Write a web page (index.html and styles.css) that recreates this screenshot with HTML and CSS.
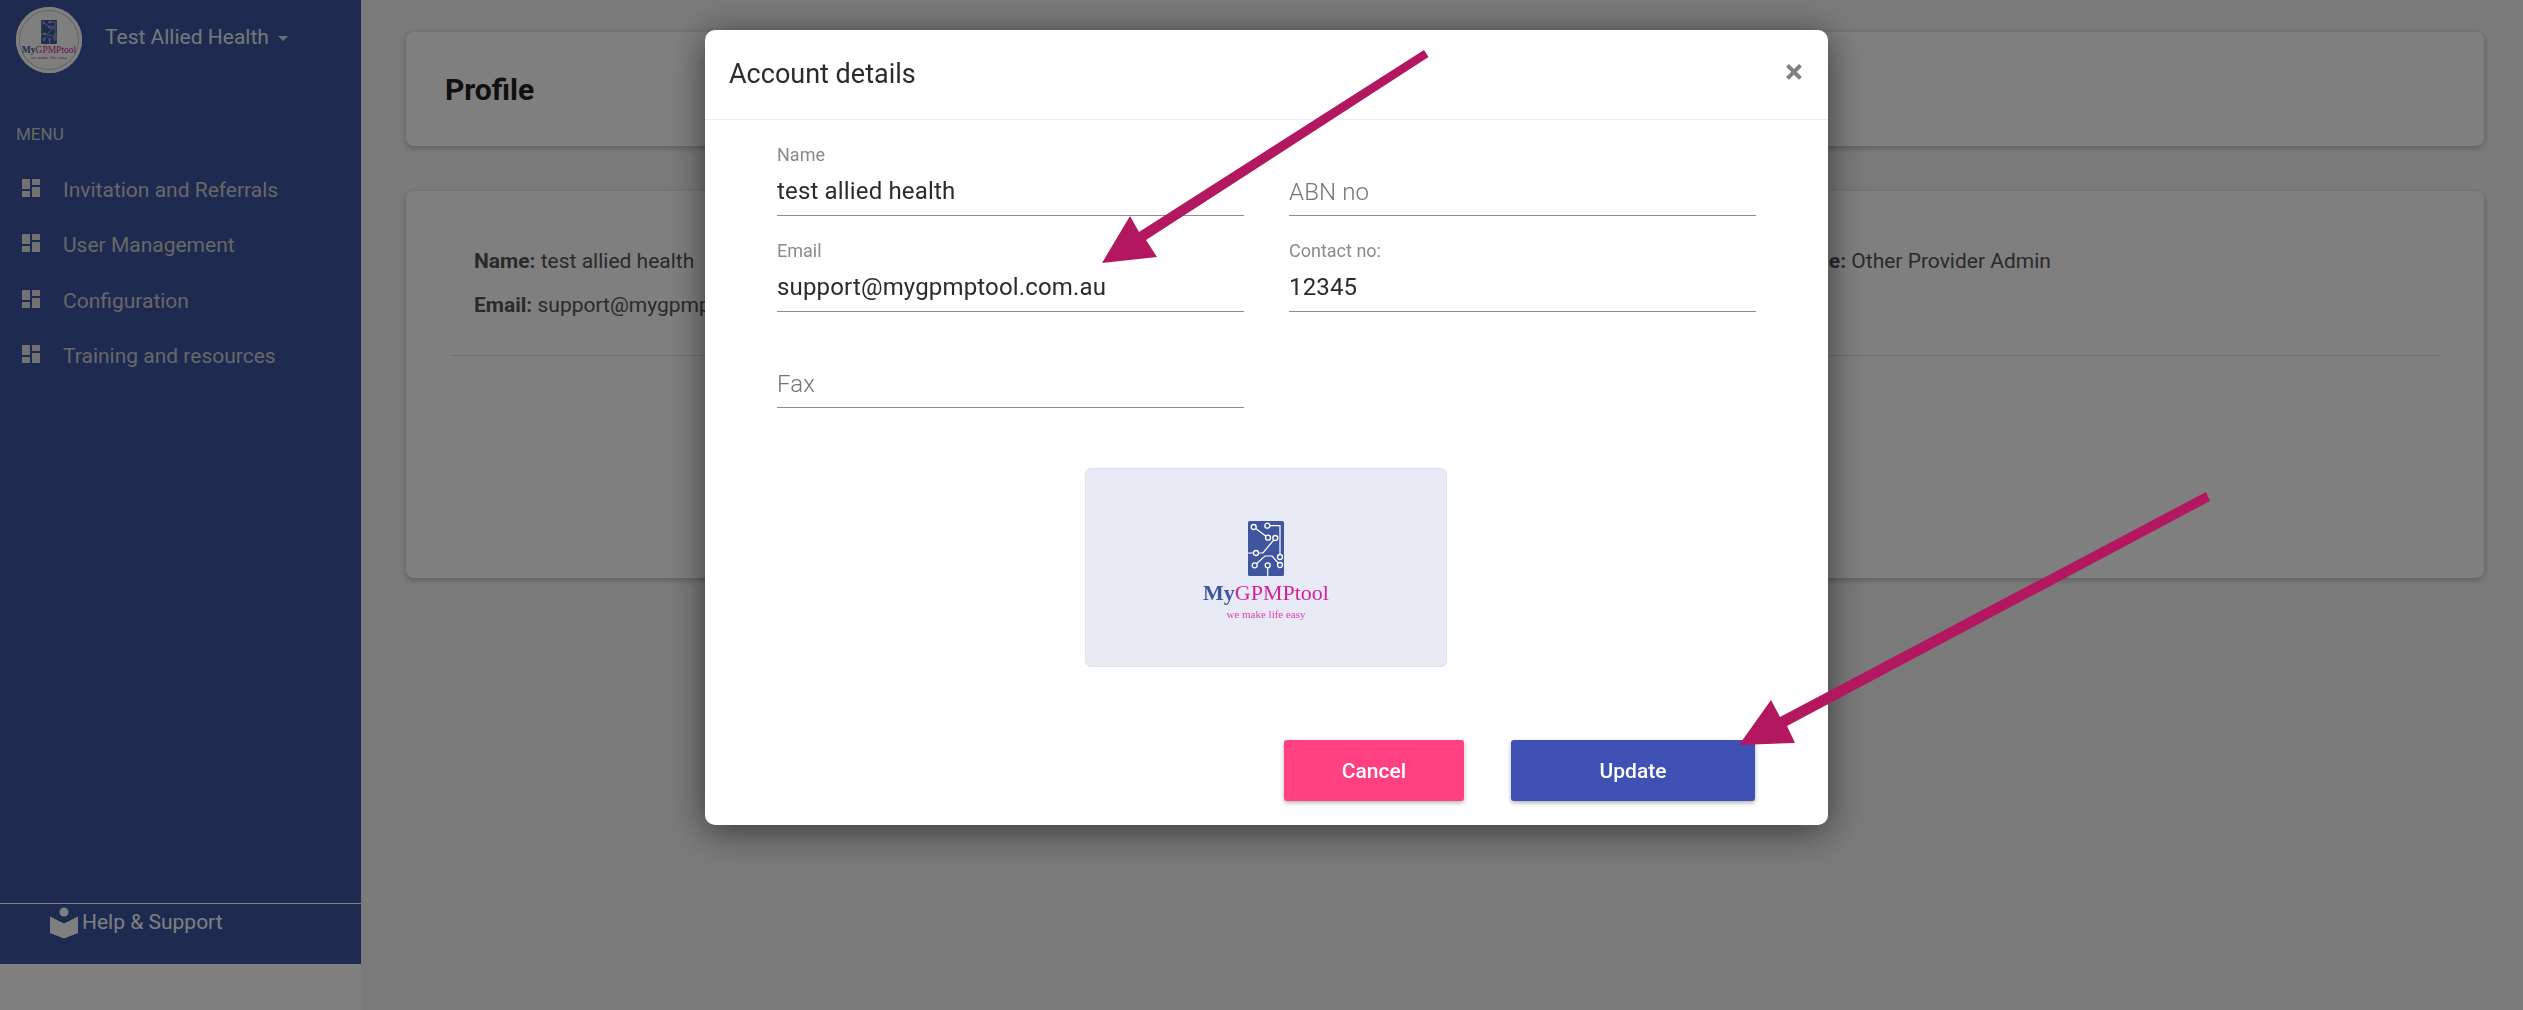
FILE: index.html
```html
<!DOCTYPE html>
<html lang="en">
<head>
	<title>Profile</title>
	<link rel="stylesheet" href="styles.css">
</head>
<body>
<svg class="defs" width="0" height="0">
	<symbol id="circuit" viewBox="0 0 36 55">
		<rect width="36" height="55" rx="1.5" fill="#3f569f"/>
		<g fill="none" stroke="#fff" stroke-width="1.2">
			<path d="M5.7 6 20 16.7M19.3 4.7H32V36M0 32H15L27.3 17M6.7 44.3 17 35H24L32 44M19.7 44.3V55"/>
			<g fill="#3f569f" stroke-width="1.3">
				<circle cx="5.7" cy="6" r="2.5"/>
				<circle cx="19.3" cy="4.7" r="2.5"/>
				<circle cx="20" cy="16.7" r="2.5"/>
				<circle cx="27.3" cy="17" r="2.5"/>
				<circle cx="8" cy="32" r="2.5"/>
				<circle cx="32" cy="36" r="2.5"/>
				<circle cx="6.7" cy="44.3" r="2.5"/>
				<circle cx="32" cy="44" r="2.5"/>
				<circle cx="19.7" cy="44.3" r="2.5"/>
			</g>
		</g>
	</symbol>
	<symbol id="dash" viewBox="3 3 18 18">
		<path d="M3 13h8V3H3v10zm0 8h8v-6H3v6zm10 0h8V11h-8v10zm0-18v6h8V3h-8z"/>
	</symbol>
</svg>

<div class="page">
	<aside class="sidebar">
		<div class="user">
			<div class="avatar">
				<svg class="avatar-icon"><use href="#circuit"/></svg>
				<div class="avatar-name"><b>My</b><span>GPMPtool</span></div>
				<div class="avatar-tag">we make life easy</div>
			</div>
			<span class="user-name">Test Allied Health</span>
			<span class="caret"></span>
		</div>
		<div class="menu-title">MENU</div>
		<nav class="menu">
			<a class="menu-item"><svg class="menu-icon"><use href="#dash"/></svg>Invitation and Referrals</a>
			<a class="menu-item"><svg class="menu-icon"><use href="#dash"/></svg>User Management</a>
			<a class="menu-item"><svg class="menu-icon"><use href="#dash"/></svg>Configuration</a>
			<a class="menu-item"><svg class="menu-icon"><use href="#dash"/></svg>Training and resources</a>
		</nav>
		<div class="help">
			<svg class="help-icon" viewBox="0 0 28 32">
				<circle cx="14" cy="5" r="4.5"/>
				<path d="M0 9.500 14 16.500 28 9.500V26L14 31.500 0 26z"/>
			</svg>
			Help &amp; Support
		</div>
	</aside>

	<main class="main">
		<section class="card card-title">
			<h1>Profile</h1>
		</section>
		<section class="card card-info">
			<div class="info">
				<p><strong>Name:</strong> test allied health</p>
				<p><strong>Role:</strong> Other Provider Admin</p>
				<p><strong>Email:</strong> support@mygpmptool.com.au</p>
			</div>
			<hr class="rule">
		</section>
	</main>
</div>

<div class="backdrop">
	<div class="modal">
		<div class="modal-head">
			<h2>Account details</h2>
			<span class="close">×</span>
		</div>
		<form class="fields">
			<div class="field">
				<label>Name</label>
				<div class="value">test allied health</div>
			</div>
			<div class="field">
				<div class="value empty">ABN no</div>
			</div>
			<div class="field">
				<label>Email</label>
				<div class="value">support@mygpmptool.com.au</div>
			</div>
			<div class="field">
				<label>Contact no:</label>
				<div class="value">12345</div>
			</div>
			<div class="field">
				<div class="value empty">Fax</div>
			</div>
		</form>
		<div class="logo-box">
			<svg class="logo-icon"><use href="#circuit"/></svg>
			<div class="logo-name"><b>My</b><span>GPMPtool</span></div>
			<div class="logo-tag">we make life easy</div>
		</div>
		<div class="modal-foot">
			<div class="btn btn-cancel">Cancel</div>
			<div class="btn btn-update">Update</div>
		</div>
	</div>
</div>

<!-- annotation arrows drawn on top of the screenshot -->
<svg class="arrows" viewBox="0 0 2523 1010">
	<polygon points="1424,50 1428.500,57 1146,240 1157,257 1102,263 1130,216 1139,232"/>
	<polygon points="2206,492 2210,501 1787,726 1795,743 1739,745 1771,700 1780,717"/>
</svg>
</body>
</html>
```

FILE: styles.css
```css
* {
	box-sizing: border-box;
}

body {
	margin: 0;
	height: 1010px;
	overflow: hidden;
	font-family: Roboto, "Liberation Sans", sans-serif;
	background: #fff;
	color: #212121;
}

.defs {
	position: absolute;
}

.page {
	display: flex;
	height: 1010px;
}

/* sidebar */
.sidebar {
	width: 361px;
	height: 964px;
	background: #3c54a0;
	display: flex;
	flex-direction: column;
	flex-shrink: 0;
	color: #e0e0e0;
}

.user {
	display: flex;
	align-items: center;
	padding: 7px 0 0 16px;
}

.avatar {
	width: 66px;
	height: 66px;
	border-radius: 50%;
	background: #fff;
	display: flex;
	flex-direction: column;
	align-items: center;
	padding-top: 13px;
	box-shadow: inset 0 0 0 3px #fff, inset 0 0 0 4px #ccc;
	overflow: hidden;
}

.avatar-icon {
	width: 16px;
	height: 24px;
}

.avatar-name {
	font-family: "Liberation Serif", serif;
	font-size: 9.500px;
	line-height: 10px;
	margin-top: 1px;
	white-space: nowrap;
	color: #cc1f8f;
}

.avatar-name b {
	color: #3f569f;
}

.avatar-tag {
	font-family: "Liberation Serif", serif;
	font-size: 5px;
	line-height: 6px;
	color: #cc1f8f;
	white-space: nowrap;
}

.user-name {
	margin-left: 23px;
	font-size: 21px;
	margin-top: -6px;
	color: #fff;
	opacity: 0.9;
}

.caret {
	margin: -4px 0 0 9px;
	border-left: 5px solid transparent;
	border-right: 5px solid transparent;
	border-top: 5px solid #ddd;
}

.menu-title {
	margin: 51px 0 0 16px;
	font-size: 17px;
	line-height: 20px;
	color: #d0d0d0;
}

.menu {
	margin-top: 18px;
	display: flex;
	flex-direction: column;
}

.menu-item {
	display: flex;
	align-items: center;
	height: 55.500px;
	padding-left: 22px;
	font-size: 21px;
	color: #cfcfcf;
}

.menu-icon {
	width: 18px;
	height: 18px;
	margin: -4px 23px 0 0;
	fill: #e4e4e4;
}

.help {
	margin-top: auto;
	height: 61px;
	border-top: 1px solid #fff;
	display: flex;
	padding: 3px 0 0 50px;
	font-size: 21px;
	line-height: 30px;
	color: #fff;
	gap: 4px;
}

.help-icon {
	width: 28px;
	height: 32px;
	fill: #fff;
}

/* main content */
.main {
	flex: 1;
	background: #f5f5f5;
	padding: 32px 39px 0 45px;
	display: flex;
	flex-direction: column;
	gap: 45px;
}

.card {
	background: #fff;
	border-radius: 8px;
	box-shadow: 0 2px 6px rgba(0, 0, 0, 0.25);
}

.card-title {
	height: 114px;
	padding: 0 39px;
	display: flex;
	align-items: center;
}

h1 {
	margin: 0;
	font-size: 30px;
	font-weight: 700;
}

.card-info {
	height: 387px;
	padding: 58px 45px 0;
}

.info {
	display: grid;
	grid-template-columns: 1324px 1fr;
	row-gap: 19px;
	padding-left: 23px;
	font-size: 21px;
	line-height: 25px;
	color: #555;
}

.info p {
	margin: 0;
}

.rule {
	margin: 37px 0 0;
	border: none;
	border-top: 1px solid #ddd;
}

/* modal */
.backdrop {
	position: fixed;
	top: 0;
	left: 0;
	right: 0;
	bottom: 0;
	background: rgba(0, 0, 0, 0.5);
	padding: 30px 0 0 705px;
}

.modal {
	width: 1123px;
	height: 795px;
	background: #fff;
	border-radius: 10px;
	box-shadow: 0 6px 36px rgba(0, 0, 0, 0.55);
	display: flex;
	flex-direction: column;
}

.modal-head {
	height: 90px;
	padding: 0 25px 0 24px;
	border-bottom: 1px solid #eee;
	display: flex;
	align-items: center;
	justify-content: space-between;
}

h2 {
	margin: 0;
	font-size: 27px;
	font-weight: 400;
	margin-top: -2px;
	color: #2b2b2b;
}

.close {
	font-size: 34px;
	font-weight: 700;
	color: #808080;
	margin-top: -8px;
}

.fields {
	margin: 23px 72px 0;
	display: grid;
	grid-template-columns: 467px 467px;
	column-gap: 45px;
	grid-auto-rows: 73px;
	row-gap: 23px;
}

.field {
	display: flex;
	flex-direction: column;
	justify-content: flex-end;
	border-bottom: 1px solid #8e8e8e;
}

.field label {
	font-size: 18px;
	line-height: 20px;
	color: #8a8a8a;
	margin-bottom: 11px;
}

.value {
	font-size: 24px;
	line-height: 30px;
	letter-spacing: 0.160px;
	color: #2b2b2b;
	padding-bottom: 9px;
}

.value.empty {
	color: #757575;
	font-weight: 300;
	padding-bottom: 8px;
}

.logo-box {
	width: 362px;
	height: 199px;
	margin: 60px 0 0 380px;
	background: #e8eaf6;
	border: 1px solid #dfe1ec;
	border-radius: 6px;
	display: flex;
	flex-direction: column;
	align-items: center;
	padding-top: 52px;
}

.logo-icon {
	width: 36px;
	height: 55px;
}

.logo-name {
	font-family: "Liberation Serif", serif;
	font-size: 22px;
	line-height: 26px;
	margin-top: 4px;
	color: #d6219b;
}

.logo-name b {
	color: #3f569f;
}

.logo-tag {
	font-family: "Liberation Serif", serif;
	font-size: 11px;
	line-height: 12px;
	margin-top: 2px;
	color: #e040b0;
}

.modal-foot {
	margin: 73px 73px 0 0;
	display: flex;
	justify-content: flex-end;
	gap: 47px;
}

.btn {
	height: 61px;
	border-radius: 3px;
	color: #fff;
	font-size: 21px;
	font-weight: 500;
	display: flex;
	align-items: center;
	justify-content: center;
	box-shadow: 0 2px 4px rgba(0, 0, 0, 0.3);
}

.btn-cancel {
	width: 180px;
	background: #ff4081;
}

.btn-update {
	width: 244px;
	background: #3f51b5;
}

.arrows {
	position: fixed;
	top: 0;
	left: 0;
	width: 2523px;
	height: 1010px;
	fill: #b2175f;
}
```
